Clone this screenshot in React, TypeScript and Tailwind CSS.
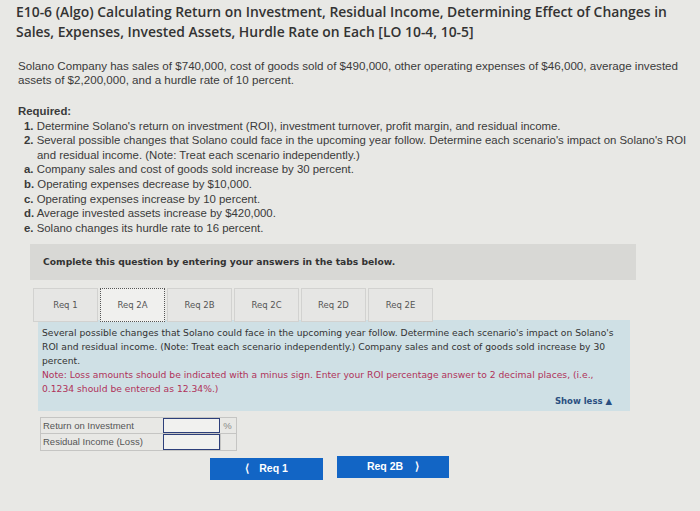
import React from "react";

const tabs = ["Req 1", "Req 2A", "Req 2B", "Req 2C", "Req 2D", "Req 2E"];

export default function App() {
  return (
    <div className="w-[700px] h-[511px] bg-[#e8e8e5] text-[#2b2b2b] overflow-hidden relative" style={{ fontFamily: '"Open Sans", sans-serif' }}>
      <div className="pl-[16px] pt-[2px] text-[13.9px] font-semibold leading-[20px] text-[#333]">
        <div>E10-6 (Algo) Calculating Return on Investment, Residual Income, Determining Effect of Changes in</div>
        <div>Sales, Expenses, Invested Assets, Hurdle Rate on Each [LO 10-4, 10-5]</div>
      </div>
      <div className="pl-[18px] pt-[17px] text-[11.6px] leading-[14px] text-[#3a3a3a]" style={{ fontFamily: '"Liberation Sans", sans-serif' }}>
        <div>Solano Company has sales of $740,000, cost of goods sold of $490,000, other operating expenses of $46,000, average invested</div>
        <div>assets of $2,200,000, and a hurdle rate of 10 percent.</div>
      </div>
      <div className="pl-[18px] pt-[17px] text-[11.4px] leading-[14.6px] text-[#3a3a3a]" style={{ fontFamily: '"Liberation Sans", sans-serif' }}>
        <div className="font-bold">Required:</div>
        <div className="pl-[6px]"><b>1.</b> Determine Solano's return on investment (ROI), investment turnover, profit margin, and residual income.</div>
        <div className="pl-[6px]"><b>2.</b> Several possible changes that Solano could face in the upcoming year follow. Determine each scenario's impact on Solano's ROI</div>
        <div className="pl-[19px]">and residual income. (Note: Treat each scenario independently.)</div>
        <div className="pl-[6px]"><b>a.</b> Company sales and cost of goods sold increase by 30 percent.</div>
        <div className="pl-[6px]"><b>b.</b> Operating expenses decrease by $10,000.</div>
        <div className="pl-[6px]"><b>c.</b> Operating expenses increase by 10 percent.</div>
        <div className="pl-[6px]"><b>d.</b> Average invested assets increase by $420,000.</div>
        <div className="pl-[6px]"><b>e.</b> Solano changes its hurdle rate to 16 percent.</div>
      </div>

      <div className="ml-[30px] mt-[9px] w-[606px]" style={{ fontFamily: '"DejaVu Sans", sans-serif' }}>
        <div className="h-[36px] bg-[#d8d8d5] flex items-center pl-[13px] text-[9.2px] font-bold text-[#333]">
          Complete this question by entering your answers in the tabs below.
        </div>
        <div className="flex mt-[8px] pl-[3px] gap-[2px] h-[34px]">
          {tabs.map((t, i) => (
            <div
              key={t}
              className={
                "w-[65px] flex items-center justify-center text-[8.5px] text-[#555] " +
                (i === 1
                  ? "bg-[#f0f0ee] border border-dotted border-[#555]"
                  : "bg-[#e6e6e4] border border-[#d2d2d0]")
              }
            >
              {t}
            </div>
          ))}
        </div>
        <div className="ml-[8px] -mt-[2px] w-[592px] bg-[#cfe0e5] pl-[4px] pr-[14px] pt-[6px] pb-[5px] text-[9.2px] leading-[14px] text-[#333]">
          <div>Several possible changes that Solano could face in the upcoming year follow. Determine each scenario's impact on Solano's ROI and residual income. (Note: Treat each scenario independently.) Company sales and cost of goods sold increase by 30 percent.</div>
          <div className="text-[#b0325a]">Note: Loss amounts should be indicated with a minus sign. Enter your ROI percentage answer to 2 decimal places, (i.e., 0.1234 should be entered as 12.34%.)</div>
          <div className="text-right font-bold text-[#2a4f80] text-[8.5px] leading-[10px] pr-[4px]">Show less ▲</div>
        </div>
      </div>

      <div className="ml-[40px] mt-[6px] w-[197px] border border-[#c5c5c3] text-[9.5px] text-[#555]" style={{ fontFamily: '"Liberation Sans", sans-serif' }}>
        <div className="flex h-[16px] border-b border-[#c5c5c3]">
          <div className="w-[123px] pl-[2px] flex items-center">Return on Investment</div>
          <div className="w-[58px] border border-[#2d3f7a] bg-[#f1f1ef]"></div>
          <div className="w-[16px] flex items-center pl-[3px] text-[#888]">%</div>
        </div>
        <div className="flex h-[16px]">
          <div className="w-[123px] pl-[2px] flex items-center">Residual Income (Loss)</div>
          <div className="w-[58px] border border-[#2d3f7a] bg-[#f1f1ef]"></div>
          <div className="w-[16px] border-l border-[#c5c5c3]"></div>
        </div>
      </div>

      <div className="flex ml-[210px] mt-[5px] gap-[14px] items-start" style={{ fontFamily: '"Liberation Sans", sans-serif' }}>
        <div className="w-[113px] h-[22px] mt-[2px] bg-[#1265c5] text-white text-[10.5px] font-bold flex items-center justify-center gap-[10px]">
          <span>&#10216;</span><span>Req 1</span>
        </div>
        <div className="w-[112px] h-[22px] bg-[#1265c5] text-white text-[10.5px] font-bold flex items-center justify-center gap-[12px]">
          <span>Req 2B</span><span>&#10217;</span>
        </div>
      </div>
    </div>
  );
}
